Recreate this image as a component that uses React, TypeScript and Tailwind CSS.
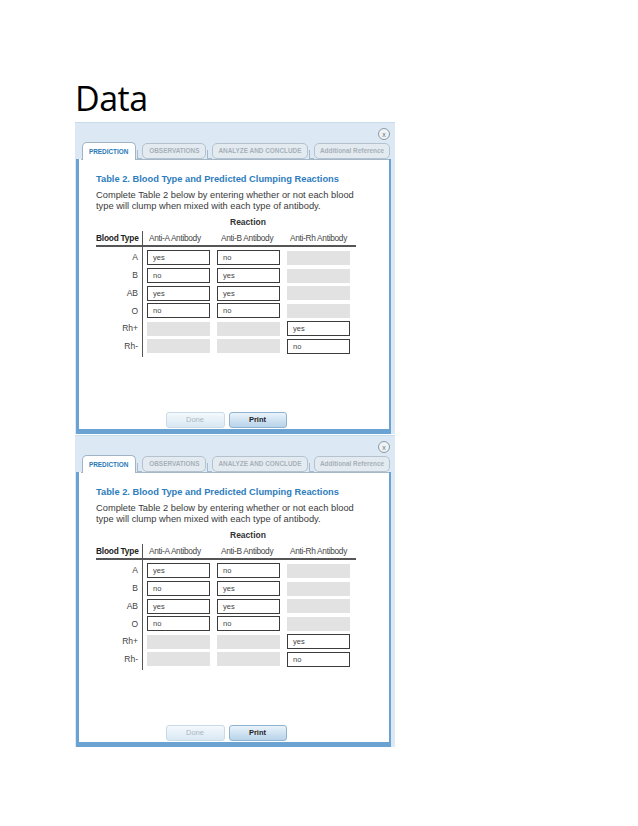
import React from "react";

type Cell = { v?: string; disabled?: boolean };

const rows: { label: string; cells: Cell[] }[] = [
  { label: "A", cells: [{ v: "yes" }, { v: "no" }, { disabled: true }] },
  { label: "B", cells: [{ v: "no" }, { v: "yes" }, { disabled: true }] },
  { label: "AB", cells: [{ v: "yes" }, { v: "yes" }, { disabled: true }] },
  { label: "O", cells: [{ v: "no" }, { v: "no" }, { disabled: true }] },
  { label: "Rh+", cells: [{ disabled: true }, { disabled: true }, { v: "yes" }] },
  { label: "Rh-", cells: [{ disabled: true }, { disabled: true }, { v: "no" }] },
];

function Tab({ label, active, w }: { label: string; active?: boolean; w: string }) {
  const text = (
    <span className="inline-block scale-x-[0.8] whitespace-nowrap">{label}</span>
  );
  if (active) {
    return (
      <div
        className={`${w} h-[18px] flex items-center justify-center whitespace-nowrap rounded-t-[5px] border border-b-0 border-[#9fb4c6] bg-white text-[8px] font-bold text-[#2a78b8] relative z-10 -mb-px font-['Liberation_Sans',Arial,sans-serif]`}
      >
        {text}
      </div>
    );
  }
  return (
    <div
      className={`${w} h-[16px] mt-[1px] flex items-center justify-center whitespace-nowrap rounded-[5px] border border-[#b3c2ce] bg-[#e3ebf1] text-[8px] font-bold text-[#a7b0b8] font-['Liberation_Sans',Arial,sans-serif]`}
    >
      {text}
    </div>
  );
}

function Connector() {
  return (
    <div className="w-[6px] h-[16px] flex flex-col justify-end">
      <div className="h-[9px] border-l border-b border-[#a9b9c6] ml-[1px]" />
    </div>
  );
}

function Panel() {
  return (
    <div className="w-[320px] h-[312px] bg-[#dce9f4] flex flex-col border-t border-[#c9dcec]">
      <div className="h-[17px] flex justify-end items-end pr-[5px]">
        <div className="w-[12px] h-[12px] rounded-full border border-[#8d99a3] bg-[#eef3f6] flex items-center justify-center text-[7px] leading-none text-[#6d7780] font-['Liberation_Sans',sans-serif]">
          x
        </div>
      </div>
      <div className="flex items-end pl-[7px] h-[19px]">
        <Tab label="PREDICTION" active w="w-[54px]" />
        <Connector />
        <Tab label="OBSERVATIONS" w="w-[64px]" />
        <Connector />
        <Tab label="ANALYZE AND CONCLUDE" w="w-[96px]" />
        <Connector />
        <Tab label="Additional Reference" w="w-[76px]" />
      </div>
      <div className="flex-1 ml-[1px] mr-[4px] bg-white border-l-[3px] border-r-[2px] border-b-[5px] border-[#6aa2d2] flex flex-col">
        <div className="border-t border-[#a6b8c7] ml-[2px] mr-0 h-0" />
        <div className="pl-[17px] pt-[13px] flex flex-col text-[#333] font-['Liberation_Sans',Arial,sans-serif]">
          <div className="text-[9.3px] font-bold text-[#2e7dbd] leading-[12px] whitespace-nowrap">
            Table 2. Blood Type and Predicted Clumping Reactions
          </div>
          <div className="mt-[5px] text-[9.3px] leading-[11px] text-[#3a3a3a] whitespace-nowrap">
            Complete Table 2 below by entering whether or not each blood
            <br />
            type will clump when mixed with each type of antibody.
          </div>
          <div className="mt-[4px] pl-[134px] text-[8.5px] font-bold text-[#333] leading-[12px]">
            Reaction
          </div>
          <div className="mt-[3px] w-[260px]">
            <div className="flex h-[16px] items-center border-b-2 border-[#555]">
              <div className="w-[47px] pr-[3px] text-[8.3px] font-bold text-[#222] border-r border-[#555] h-full flex items-center whitespace-nowrap tracking-[-0.2px]">
                Blood Type
              </div>
              <div className="w-[71px] pl-[6px] text-[8.3px] text-[#444] tracking-[-0.3px] whitespace-nowrap">Anti-A Antibody</div>
              <div className="w-[69px] pl-[7px] text-[8.3px] text-[#444] tracking-[-0.3px] whitespace-nowrap">Anti-B Antibody</div>
              <div className="flex-1 pl-[7px] text-[8.3px] text-[#444] tracking-[-0.3px] whitespace-nowrap">Anti-Rh Antibody</div>
            </div>
            <div className="flex">
              <div className="w-[47px] border-r border-[#555] flex flex-col pt-[2px] pb-[2px]">
                {rows.map((r) => (
                  <div key={r.label} className="h-[17.7px] flex items-center justify-end pr-[4px] text-[8.5px] text-[#444]">
                    {r.label}
                  </div>
                ))}
              </div>
              <div className="flex flex-col pt-[2px] pl-[4px]">
                {rows.map((r) => (
                  <div key={r.label} className="h-[17.7px] flex items-center gap-[7px]">
                    {r.cells.map((c, i) =>
                      c.disabled ? (
                        <div key={i} className="w-[63px] h-[14px] bg-[#e2e2e2]" />
                      ) : (
                        <div
                          key={i}
                          className="w-[63px] h-[15px] border border-[#3c3c3c] bg-white text-[7.5px] text-[#444] pl-[5px] flex items-center"
                        >
                          {c.v}
                        </div>
                      )
                    )}
                  </div>
                ))}
              </div>
            </div>
          </div>
        </div>
        <div className="flex-1" />
        <div className="flex justify-center gap-[4px] pb-[1px] pr-[16px] font-['Liberation_Sans',Arial,sans-serif]">
          <div className="w-[59px] h-[16px] rounded-[3px] border border-[#c9dbe8] bg-gradient-to-b from-[#f4f9fc] to-[#d9e8f3] text-[7.5px] text-[#a9b6c0] flex items-center justify-center">
            Done
          </div>
          <div className="w-[58px] h-[16px] rounded-[3px] border border-[#8fb3d1] bg-gradient-to-b from-[#eaf3fa] to-[#b7d3ea] text-[7.5px] font-bold text-[#222] flex items-center justify-center">
            Print
          </div>
        </div>
      </div>
    </div>
  );
}

export default function App() {
  return (
    <div className="w-[638px] h-[826px] bg-white">
      <div className="pl-[75px] pt-[77px]">
        <div className="text-[34px] leading-[43px] text-black font-['Open_Sans',sans-serif] tracking-[-0.5px]">Data</div>
        <div className="mt-[2px] flex flex-col gap-[1px]">
          <Panel />
          <Panel />
        </div>
      </div>
    </div>
  );
}
